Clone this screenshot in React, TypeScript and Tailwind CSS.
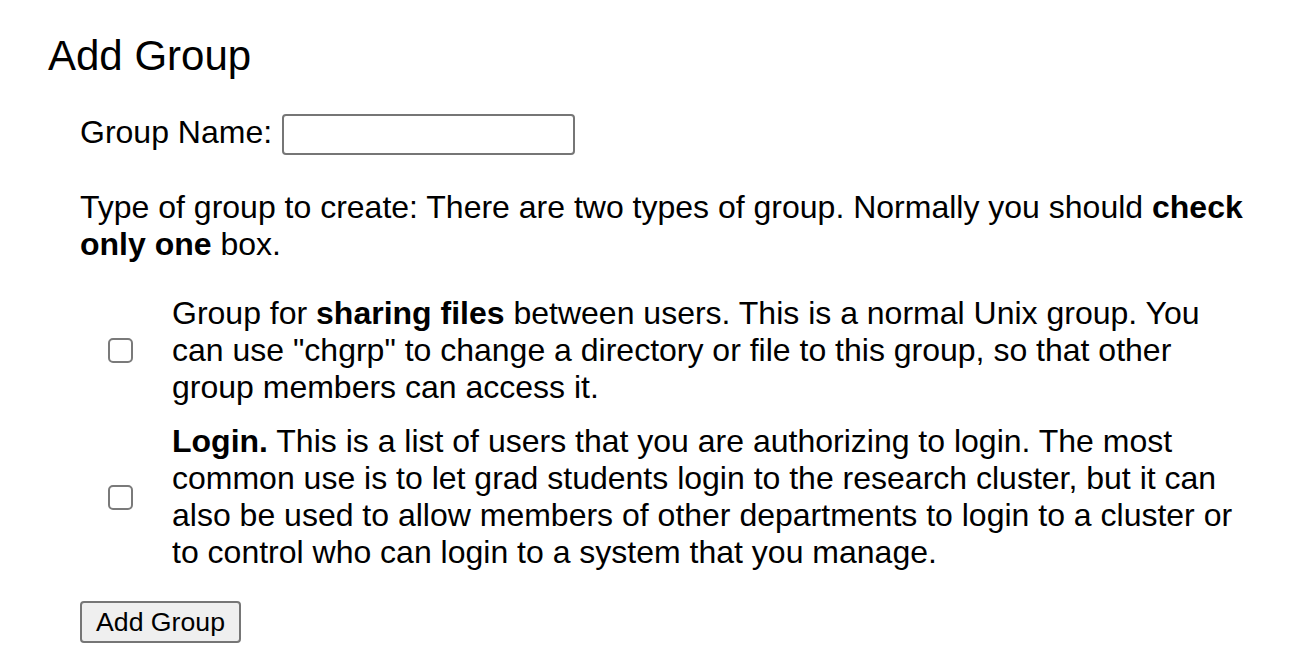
export default function App() {
  return (
    <div className="min-h-screen bg-white text-black font-['Liberation_Sans',Arial,Helvetica,sans-serif]">
      <div className="pl-[48px] pt-[32px] pr-4">
        <h2 className="text-[42px] leading-[48px]">Add Group</h2>

        <div className="pl-[32px] pt-[34px]">
          <div className="flex items-baseline text-[32px] leading-[37px]">
            <span>Group Name:</span>
            <input
              type="text"
              className="ml-[10px] h-[41px] w-[293px] rounded-[4px] border-2 border-[#767676] bg-white px-1 text-[26.67px] outline-none"
            />
          </div>

          <p className="mt-[34px] text-[32px] leading-[37px]">
            Type of group to create: There are two types of group. Normally you should{' '}
            <b>check only one</b> box.
          </p>

          <div className="mt-[32px] flex flex-col gap-[17px] text-[32px] leading-[37px]">
            <label className="flex items-center">
              <span className="flex w-[92px] shrink-0 pl-[28px]">
                <input
                  type="checkbox"
                  className="h-[25px] w-[25px] appearance-none rounded-[5px] border-2 border-[#7a7a7a] bg-white"
                />
              </span>
              <span className="w-[1076px]">
                Group for <b>sharing files</b> between users. This is a normal Unix group. You can use
                "chgrp" to change a directory or file to this group, so that other group members can
                access it.
              </span>
            </label>

            <label className="flex items-center">
              <span className="flex w-[92px] shrink-0 pl-[28px]">
                <input
                  type="checkbox"
                  className="h-[25px] w-[25px] appearance-none rounded-[5px] border-2 border-[#7a7a7a] bg-white"
                />
              </span>
              <span className="w-[1076px]">
                <b>Login.</b> This is a list of users that you are authorizing to login. The most common
                use is to let grad students login to the research cluster, but it can also be used to
                allow members of other departments to login to a cluster or to control who can login to
                a system that you manage.
              </span>
            </label>
          </div>

          <button
            type="button"
            className="mt-[30px] h-[42px] w-[161px] rounded-[4px] border-2 border-[#767676] bg-[#efefef] text-[26.67px] leading-[30px]"
          >
            Add Group
          </button>
        </div>
      </div>
    </div>
  );
}
